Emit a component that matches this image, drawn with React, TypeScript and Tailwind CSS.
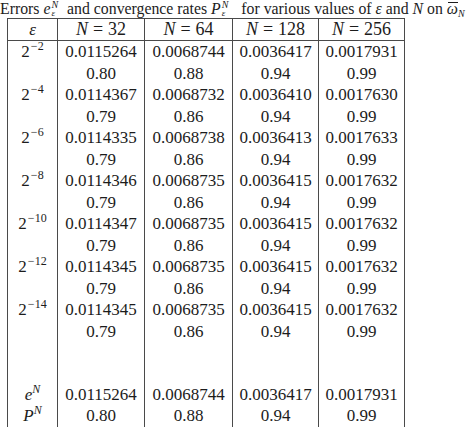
import React from "react";

const cols = "grid grid-cols-[50px_87px_88px_86px_86px]";
const cell = "border-r border-[#4a4a4a] text-center whitespace-nowrap";

type Block = { exp: string; vals: string[]; rates: string[] };

const blocks: Block[] = [
  { exp: "−2", vals: ["0.0115264", "0.0068744", "0.0036417", "0.0017931"], rates: ["0.80", "0.88", "0.94", "0.99"] },
  { exp: "−4", vals: ["0.0114367", "0.0068732", "0.0036410", "0.0017630"], rates: ["0.79", "0.86", "0.94", "0.99"] },
  { exp: "−6", vals: ["0.0114335", "0.0068738", "0.0036413", "0.0017633"], rates: ["0.79", "0.86", "0.94", "0.99"] },
  { exp: "−8", vals: ["0.0114346", "0.0068735", "0.0036415", "0.0017632"], rates: ["0.79", "0.86", "0.94", "0.99"] },
  { exp: "−10", vals: ["0.0114347", "0.0068735", "0.0036415", "0.0017632"], rates: ["0.79", "0.86", "0.94", "0.99"] },
  { exp: "−12", vals: ["0.0114345", "0.0068735", "0.0036415", "0.0017632"], rates: ["0.79", "0.86", "0.94", "0.99"] },
  { exp: "−14", vals: ["0.0114345", "0.0068735", "0.0036415", "0.0017632"], rates: ["0.79", "0.86", "0.94", "0.99"] },
];

function Row({ first, values, h = "h-[21.5px] leading-[21.5px]" }: { first: React.ReactNode; values: string[]; h?: string }) {
  return (
    <div className={cols}>
      <div className={`${cell} ${h}`}>{first}</div>
      {values.map((v, i) => (
        <div key={i} className={`${cell} ${h}`}>
          {v}
        </div>
      ))}
    </div>
  );
}

function Pow({ exp }: { exp: string }) {
  return (
    <span>
      2<span className="relative -top-[7px] text-[12px] ml-[1px]">{exp}</span>
    </span>
  );
}

function SupN({ base }: { base: string }) {
  return (
    <span>
      <span className="italic">{base}</span>
      <span className="relative -top-[7px] text-[12px] italic">N</span>
    </span>
  );
}

function Stack({ base }: { base: string }) {
  return (
    <span className="italic">
      {base}
      <span className="inline-flex flex-col align-[6px] text-[10px] leading-[9px] ml-[1px] mr-[5px]">
        <span>N</span>
        <span className="text-[9px]">ε</span>
      </span>
    </span>
  );
}

export default function App() {
  return (
    <div
      className="bg-white text-[#1c1c1c] w-[474px] h-[427px] overflow-hidden"
      style={{ fontFamily: '"Liberation Serif", "Times New Roman", serif' }}
    >
      <div className="h-[18px] text-[15.8px] leading-[17px] whitespace-nowrap overflow-hidden">
        Errors <Stack base="e" /> and convergence rates <Stack base="P" /> &nbsp;for various values of{" "}
        <span className="italic">ε</span> and <span className="italic">N</span> on{" "}
        <span className="relative inline-block italic">
          ω
          <span className="absolute left-[1px] right-[0px] top-[2px] h-[1px] bg-[#1c1c1c]" />
        </span>
        <span className="relative top-[3px] text-[10px] italic">N</span>
      </div>
      <div className="ml-[7px] border-l border-t border-[#4a4a4a] w-[398px] text-[17px]">
        <div className="border-b border-[#4a4a4a]">
          <div className={cols}>
            <div className={`${cell} h-[21px] leading-[21px]`}>
              <span className="italic">ε</span>
            </div>
            {["32", "64", "128", "256"].map((n) => (
              <div key={n} className={`${cell} h-[21px] leading-[21px] text-[18px]`}>
                <span className="italic">N</span>
                <span className="mx-[5px]">=</span>
                {n}
              </div>
            ))}
          </div>
        </div>
        {blocks.map((b, i) => (
          <React.Fragment key={i}>
            <Row first={<Pow exp={b.exp} />} values={b.vals} />
            <Row first="" values={b.rates} />
          </React.Fragment>
        ))}
        <Row first="" values={["", "", "", ""]} h="h-[41.5px]" />
        <Row first={<SupN base="e" />} values={["0.0115264", "0.0068744", "0.0036417", "0.0017931"]} />
        <Row first={<SupN base="P" />} values={["0.80", "0.88", "0.94", "0.99"]} />
        <Row first="" values={["", "", "", ""]} h="h-[20px]" />
      </div>
    </div>
  );
}
